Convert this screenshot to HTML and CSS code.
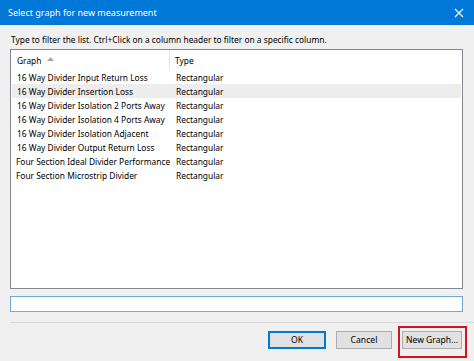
FILE: index.html
```html
<!DOCTYPE html>
<html>
  <head>
    <meta charset="utf-8" />
    <title>Select graph for new measurement</title>
    <link rel="stylesheet" href="styles.css">
  </head>
  <body>
    <div class="dialog">
      <div class="titlebar">
        <span class="title">Select graph for new measurement</span>
        <svg class="close" width="10" height="10" viewBox="0 0 10 10">
          <path d="M1 1L9 9M9 1L1 9" stroke="#fff" stroke-width="1.1" fill="none" />
        </svg>
      </div>
      <div class="content">
        <p class="hint">Type to filter the list. Ctrl+Click on a column header to filter on a specific column.</p>
        <div class="list">
          <div class="list-head">
            <div class="col col-graph">
              Graph
              <svg class="sort" width="7" height="4" viewBox="0 0 7 4">
                <path d="M0 4L3.5 0L7 4Z" fill="#a7a7a7" />
              </svg>
            </div>
            <div class="col col-type">Type</div>
          </div>
          <div class="row"><span class="cell-graph">16 Way Divider Input Return Loss</span><span>Rectangular</span></div>
          <div class="row selected"><span class="cell-graph">16 Way Divider Insertion Loss</span><span>Rectangular</span></div>
          <div class="row"><span class="cell-graph">16 Way Divider Isolation 2 Ports Away</span><span>Rectangular</span></div>
          <div class="row"><span class="cell-graph">16 Way Divider Isolation 4 Ports Away</span><span>Rectangular</span></div>
          <div class="row"><span class="cell-graph">16 Way Divider Isolation Adjacent</span><span>Rectangular</span></div>
          <div class="row"><span class="cell-graph">16 Way Divider Output Return Loss</span><span>Rectangular</span></div>
          <div class="row"><span class="cell-graph cell-wide">Four Section Ideal Divider Performance</span><span>Rectangular</span></div>
          <div class="row"><span class="cell-graph cell-wide">Four Section Microstrip Divider</span><span>Rectangular</span></div>
        </div>
        <div class="filter"></div>
      </div>
      <div class="footer">
        <button class="btn btn-default">OK</button>
        <button class="btn">Cancel</button>
        <button class="btn btn-marked">New Graph...</button>
      </div>
    </div>
  </body>
</html>
```

FILE: styles.css
```css
* {
  margin: 0;
  padding: 0;
  box-sizing: border-box;
}
html,
body {
  width: 100%;
  height: 100%;
}
body {
  font-family: "Noto Sans", "Open Sans", sans-serif;
  color: #000;
  background: #f0f0f0;
}
.dialog {
  width: 474px;
  height: 361px;
  display: flex;
  flex-direction: column;
  background: #f0f0f0;
  overflow: hidden;
}
.titlebar {
  height: 25px;
  background: #0078d7;
  color: #fff;
  display: flex;
  align-items: center;
  justify-content: space-between;
  padding: 0 10px 0 8px;
  flex-shrink: 0;
}
.title {
  font-size: 9px;
}
.content {
  padding: 0 11px 0 10px;
  display: flex;
  flex-direction: column;
}
.hint {
  font-size: 8.4px;
  height: 24px;
  line-height: 30px;
  padding-left: 1px;
}
.list {
  height: 240px;
  background: #fff;
  border: 1px solid #828790;
  padding: 0 1px;
  font-size: 8.4px;
}
.list-head {
  display: flex;
  height: 20px;
  align-items: stretch;
}
.col {
  display: flex;
  align-items: center;
}
.col-graph {
  width: 158px;
  padding-left: 5px;
  border-right: 1px solid #e5e5e5;
  gap: 6px;
}
.sort {
  margin-top: -2px;
}
.col-type {
  padding-left: 5px;
}
.row {
  display: flex;
  height: 14px;
  align-items: center;
}
.row.selected {
  background: #ededed;
}
.cell-graph {
  width: 164px;
  padding-left: 5px;
}
.cell-wide {
  padding-left: 4px;
}
.filter {
  margin-top: 7px;
  height: 16px;
  background: #fff;
  border: 1px solid #6fa8dc;
}
.footer {
  margin-top: 10px;
  margin-left: 10px;
  border-top: 1px solid #d8d8d8;
  display: flex;
  justify-content: flex-end;
  gap: 10px;
  padding: 8px 12px 0 0;
}
.btn {
  font-family: inherit;
  font-size: 8.6px;
  width: 56px;
  height: 18px;
  background: #e1e1e1;
  border: 1px solid #adadad;
  color: #000;
}
.btn-default {
  width: 58px;
  border: 1px solid #0078d7;
  box-shadow: inset 0 0 0 1px #0078d7;
}
.btn-marked {
  width: 60px;
  position: relative;
}
.btn-marked::after {
  content: "";
  position: absolute;
  top: -6px;
  bottom: -10px;
  left: -5px;
  right: -6px;
  border: 2px solid #d2141e;
}
```
